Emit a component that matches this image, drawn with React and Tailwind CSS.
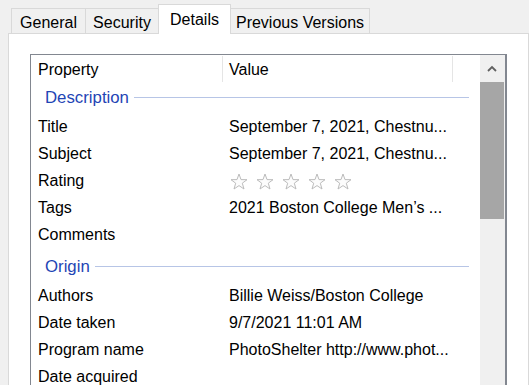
import React from "react";

const Star = () => (
  <svg width="18" height="17" viewBox="0 0 18 17" className="shrink-0">
    <path
      d="M9 1 L11 6.6 L17 6.7 L12.3 10.2 L14 16 L9 12.6 L4 16 L5.7 10.2 L1 6.7 L7 6.6 Z"
      fill="#fcfcfc"
      stroke="#bcbcbc"
      strokeWidth="1"
      strokeLinejoin="round"
    />
  </svg>
);

const Row = ({ label, value, children }) => (
  <div className="flex h-[27px] items-center whitespace-nowrap">
    <div className="w-[198px] shrink-0 pl-[7px]">{label}</div>
    <div className="flex-1 overflow-hidden">{children || value}</div>
  </div>
);

const Group = ({ title, first }) => (
  <div className={`flex h-[30px] items-start whitespace-nowrap ${first ? "" : "mt-[4px]"}`}>
    <div className="pl-[14px] pt-[5px] text-[#1f45b5] text-[16.8px] leading-[20px]">{title}</div>
    <div className="ml-[5px] mr-[11px] mt-[14px] h-px flex-1 bg-[#b7c5e6]" />
  </div>
);

export default function App() {
  return (
    <div className="w-[529px] h-[385px] overflow-hidden bg-[#f0f0f0] font-['Liberation_Sans',Arial,sans-serif] text-[16px] text-black">
      <div className="relative z-10 flex h-[33px] items-end pl-[11px]">
        <div className="flex h-[25px] w-[74px] items-center justify-center border-l border-t border-[#d9d9d9] pt-[3px]">General</div>
        <div className="flex h-[25px] w-[73px] items-center justify-center border-l border-t border-[#d9d9d9] pt-[3px]">Security</div>
        <div className="-mb-px flex h-[30px] w-[73px] items-center justify-center border-l border-r border-t border-[#d9d9d9] bg-white">Details</div>
        <div className="flex h-[25px] w-[139px] items-center justify-center border-r border-t border-[#d9d9d9] pt-[3px]">Previous Versions</div>
      </div>
      <div className="ml-[8px] h-[400px] w-[521px] border border-[#d9d9d9] bg-white pl-[21px] pt-[20px]">
        <div className="flex h-[360px] w-[477px] border-l border-t border-r-2 border-[#828790]">
          <div className="flex-1 overflow-hidden">
            <div className="flex h-[28px] items-center whitespace-nowrap">
              <div className="w-[191px] shrink-0 pl-[7px] pt-[2px]">Property</div>
              <div className="h-[26px] w-px bg-[#e5e5e5]" />
              <div className="w-[229px] shrink-0 pl-[6px] pt-[2px]">Value</div>
              <div className="h-[26px] w-px bg-[#e5e5e5]" />
            </div>
            <Group title="Description" first />
            <Row label="Title" value="September 7, 2021, Chestnu..." />
            <Row label="Subject" value="September 7, 2021, Chestnu..." />
            <Row label="Rating">
              <div className="flex gap-[8px] pl-[1px] pt-[1px]">
                <Star />
                <Star />
                <Star />
                <Star />
                <Star />
              </div>
            </Row>
            <Row label="Tags" value="2021 Boston College Men’s ..." />
            <Row label="Comments" value="" />
            <Group title="Origin" />
            <Row label="Authors" value="Billie Weiss/Boston College" />
            <Row label="Date taken" value="9/7/2021 11:01 AM" />
            <Row label="Program name" value="PhotoShelter http://www.phot..." />
            <Row label="Date acquired" value="" />
          </div>
          <div className="flex w-[25px] shrink-0 flex-col bg-[#f0f0f0]">
            <div className="flex h-[27px] items-center justify-center pr-px">
              <svg width="10" height="7" viewBox="0 0 10 7">
                <path d="M1 6 L5 2 L9 6" fill="none" stroke="#606060" strokeWidth="1.8" />
              </svg>
            </div>
            <div className="h-[137px] w-[24px] bg-[#a6a6a6]" />
          </div>
        </div>
      </div>
    </div>
  );
}
